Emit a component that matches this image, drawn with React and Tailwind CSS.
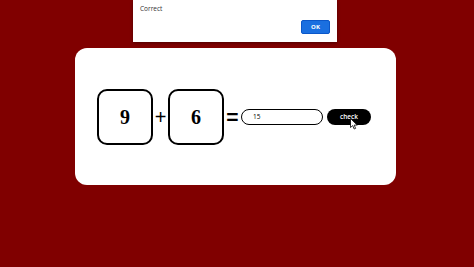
import React from "react";

export default function App() {
  return (
    <div className="relative w-[474px] h-[267px] bg-[#800000] overflow-hidden" style={{ fontFamily: '"Open Sans", "Liberation Sans", sans-serif' }}>
      {/* alert dialog */}
      <div className="absolute left-[133px] top-0 w-[204px] h-[42px] bg-white shadow-[0_1px_3px_rgba(0,0,0,0.4)]">
        <div className="pl-[7px] pt-[4px] text-[6.5px] text-[#333]">Correct</div>
        <div className="absolute left-[168px] top-[20px] w-[29px] h-[14px] rounded-[2px] bg-[#1a6fe0] border border-[#0b57c9] flex items-center justify-center text-white text-[6px] font-bold">OK</div>
      </div>

      <div className="pt-[48px] pl-[75px] flex">
        <div className="w-[321px] h-[137px] bg-white rounded-[12px] flex items-center pl-[22px]">
          <div className="w-[56px] h-[56px] border-[2.5px] border-black rounded-[10px] flex items-center justify-center text-[20px] font-bold text-black" style={{ fontFamily: '"Liberation Serif", serif' }}>9</div>
          <div className="w-[15px] text-center text-[20px] leading-none text-black" style={{ fontFamily: '"Liberation Sans", sans-serif' }}>+</div>
          <div className="w-[56px] h-[56px] border-[2.5px] border-black rounded-[10px] flex items-center justify-center text-[20px] font-bold text-black" style={{ fontFamily: '"Liberation Serif", serif' }}>6</div>
          <div className="w-[17px] text-center text-[21px] font-semibold leading-none text-black" style={{ fontFamily: '"Liberation Sans", sans-serif' }}>=</div>
          <div className="w-[82px] h-[16px] border-[1.5px] border-black rounded-full flex items-center pl-[11px] text-[6.5px] text-black">15</div>
          <div className="ml-[4px] w-[44px] h-[16px] bg-black rounded-full flex items-center justify-center text-white text-[6.5px] font-semibold">check</div>
        </div>
      </div>

      {/* mouse cursor */}
      <svg className="absolute left-[350px] top-[118px]" width="8" height="12" viewBox="0 0 8 12">
        <path d="M0.5 0.5 L0.5 9.5 L2.7 7.6 L4.2 11 L5.6 10.4 L4.2 7.1 L7.2 7.1 Z" fill="white" stroke="black" strokeWidth="0.8" strokeLinejoin="round" />
      </svg>
    </div>
  );
}
